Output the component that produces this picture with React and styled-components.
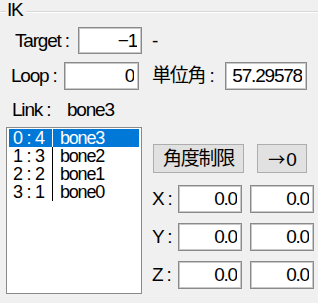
import React from "react";
import styled, { createGlobalStyle } from "styled-components";

const GlobalStyle = createGlobalStyle`
  html, body { margin: 0; padding: 0; background: #f0f0f0; }
`;

const Panel = styled.div`
  width: 318px;
  height: 303px;
  overflow: hidden;
  background: #f0f0f0;
  color: #000;
  font-family: "Liberation Sans", "Noto Sans CJK JP", sans-serif;
  font-size: 19px;
  letter-spacing: -1.2px;
  box-sizing: border-box;
`;

const GroupHeader = styled.div`
  display: flex;
  align-items: center;
  height: 24px;
`;

const HeaderLine = styled.div`
  height: 0;
  border-top: 1px solid #d7d7d7;
  border-bottom: 1px solid #ffffff;
  flex: ${(p) => (p.$grow ? "1" : "none")};
  width: ${(p) => (p.$w ? `${p.$w}px` : "auto")};
`;

const GroupTitle = styled.span`
  padding: 0 3px 0 1px;
  line-height: 20px;
  margin-top: -4px;
`;

const Row = styled.div`
  display: flex;
  align-items: center;
  height: ${(p) => p.$h}px;
  margin-top: ${(p) => p.$mt || 0}px;
  padding-left: ${(p) => p.$pl || 0}px;
`;

const Label = styled.span`
  flex: none;
  width: ${(p) => (p.$w ? `${p.$w}px` : "auto")};
  margin-left: ${(p) => p.$ml || 0}px;
  white-space: nowrap;
  line-height: 22px;
`;

const Field = styled.input`
  flex: none;
  box-sizing: border-box;
  width: ${(p) => p.$w}px;
  height: ${(p) => p.$h || 28}px;
  margin: 0;
  margin-left: ${(p) => p.$ml || 0}px;
  padding: 0 4px 0 0;
  border: 1px solid #8a8a8a;
  box-shadow: inset 0 0 0 1px #c8c8c8;
  background: #fff;
  color: #000;
  font: inherit;
  letter-spacing: inherit;
  text-align: right;
  outline: none;
`;

const Main = styled.div`
  display: flex;
  margin-top: 3px;
  padding-left: 6px;
`;

const ListBox = styled.div`
  flex: none;
  box-sizing: border-box;
  width: 136px;
  height: 167px;
  padding: 1px 2px;
  border: 1px solid #8a8a8a;
  background: #fff;
  font-size: 18px;
`;

const ListRow = styled.div`
  display: grid;
  grid-template-columns: 44px 1fr;
  height: 18px;
  line-height: 18px;
  background: ${(p) => (p.$selected ? "#0078d7" : "transparent")};
  color: ${(p) => (p.$selected ? "#fff" : "#000")};
`;

const IndexCell = styled.span`
  display: flex;
  justify-content: space-between;
  box-sizing: border-box;
  padding: 0 7px 0 4px;
  border-right: 1px solid currentColor;
  letter-spacing: 0;
`;

const NameCell = styled.span`
  padding-left: 7px;
`;

const Side = styled.div`
  display: flex;
  flex-direction: column;
  margin-left: 10px;
  padding-top: 17px;
  gap: 10px;
`;

const ButtonRow = styled.div`
  display: flex;
  gap: 13px;
  padding-left: 1px;
  margin-bottom: 2px;
`;

const Button = styled.button`
  box-sizing: border-box;
  width: ${(p) => p.$w}px;
  height: 29px;
  margin: 0;
  padding: 0;
  border: 1px solid #adadad;
  background: #e1e1e1;
  color: #000;
  font: inherit;
  letter-spacing: inherit;
  line-height: 27px;
`;

const Arrow = styled.span`
  font-family: "Noto Sans CJK JP", sans-serif;
  font-size: 17px;
  letter-spacing: 0;
  margin-right: 1px;
`;

const CoordRow = styled.div`
  display: flex;
  align-items: center;
  height: 28px;
`;

const links = [
  { from: "0", to: "4", name: "bone3" },
  { from: "1", to: "3", name: "bone2" },
  { from: "2", to: "2", name: "bone1" },
  { from: "3", to: "1", name: "bone0" },
];

export default function App() {
  return (
    <>
      <GlobalStyle />
      <Panel>
        <GroupHeader>
          <HeaderLine $w={6} />
          <GroupTitle>IK</GroupTitle>
          <HeaderLine $grow />
        </GroupHeader>

        <Row $h={27} $mt={3} $pl={15}>
          <Label $w={63}>Target :</Label>
          <Field $w={64} $h={27} readOnly value="−1" />
          <Label $ml={10}>-</Label>
        </Row>

        <Row $h={28} $mt={8} $pl={11}>
          <Label $w={53}>Loop :</Label>
          <Field $w={75} readOnly value="0" />
          <Label $w={73} $ml={13}>単位角 :</Label>
          <Field $w={82} readOnly value="57.29578" />
        </Row>

        <Row $h={28} $mt={6} $pl={12}>
          <Label $w={55}>Link :</Label>
          <Label>bone3</Label>
        </Row>

        <Main>
          <ListBox>
            {links.map((l, i) => (
              <ListRow key={l.name} $selected={i === 0}>
                <IndexCell>
                  <span>{l.from}</span>
                  <span>:</span>
                  <span>{l.to}</span>
                </IndexCell>
                <NameCell>{l.name}</NameCell>
              </ListRow>
            ))}
          </ListBox>
          <Side>
            <ButtonRow>
              <Button $w={91}>角度制限</Button>
              <Button $w={50}>
                <Arrow>→</Arrow>0
              </Button>
            </ButtonRow>
            {["X", "Y", "Z"].map((axis) => (
              <CoordRow key={axis}>
                <Label $w={26}>{axis} :</Label>
                <Field $w={64} readOnly value="0.0" />
                <Field $w={64} $ml={8} readOnly value="0.0" />
              </CoordRow>
            ))}
          </Side>
        </Main>
      </Panel>
    </>
  );
}
